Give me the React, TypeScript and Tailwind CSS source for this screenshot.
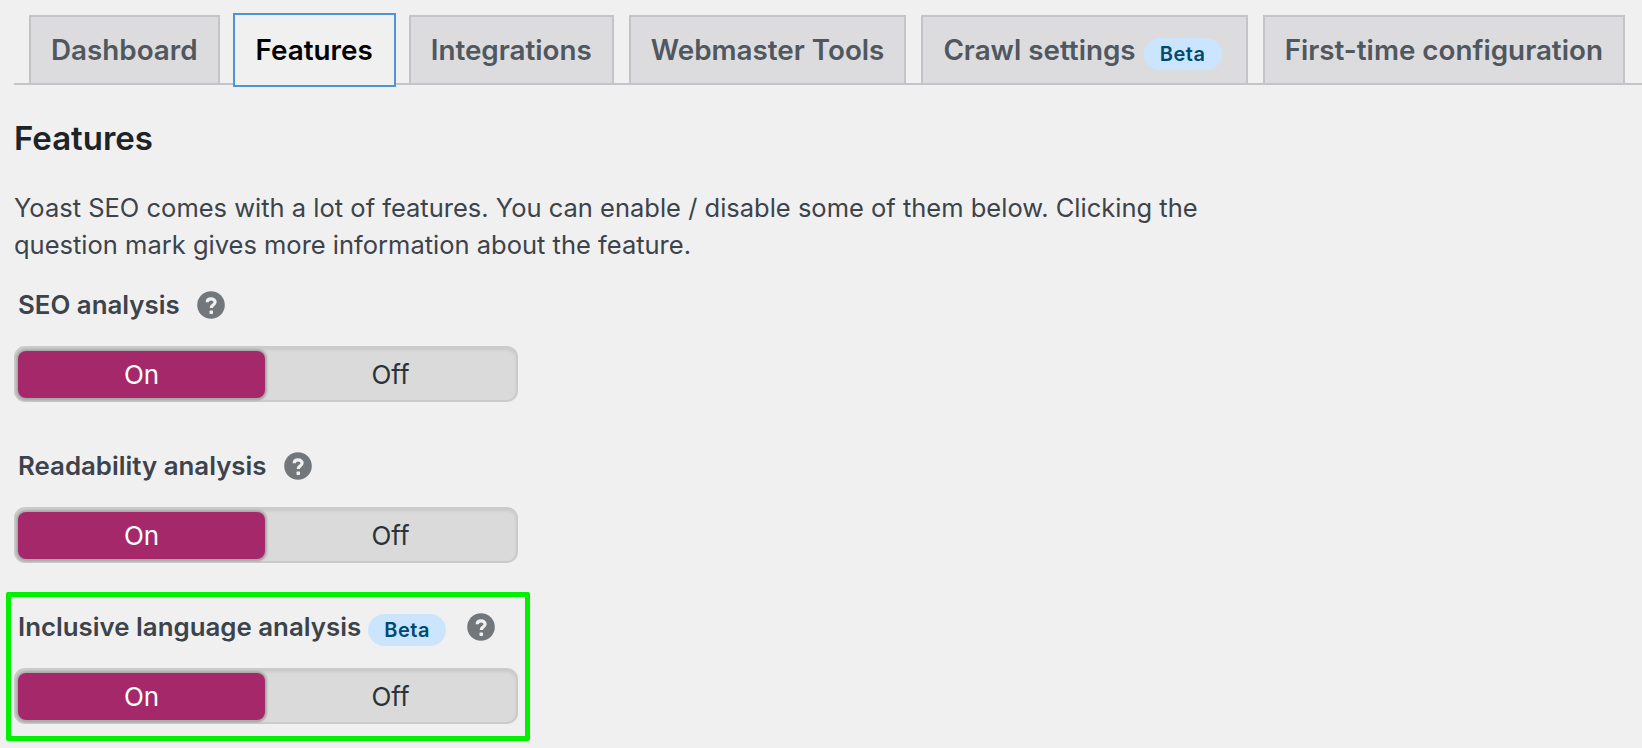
import React from "react";

const font = { fontFamily: "Inter, 'Liberation Sans', sans-serif" };

const HelpIcon = () => (
  <svg width="28" height="28" viewBox="0 0 28 28" className="shrink-0">
    <circle cx="14" cy="14" r="13.8" fill="#72777c" />
    <path d="M10.2 11.3c0-2.2 1.7-3.5 3.9-3.5s4 1.2 4 3.2c0 1.7-1 2.4-2.1 3.1-1.1.7-1.7 1.3-1.7 2.9" fill="none" stroke="#f0f0f1" strokeWidth="3.2" />
    <rect x="12.5" y="19.4" width="3.5" height="3.5" rx="0.7" fill="#f0f0f1" />
  </svg>
);

const BetaBadge = () => (
  <span className="inline-flex items-center justify-center w-[78px] h-[32px] rounded-2xl bg-[#cce5ff] text-[#004973] text-[20px] font-semibold tracking-[0.5px] shrink-0">
    Beta
  </span>
);

const Toggle = () => (
  <div className="w-[504px] h-[56px] rounded-[11px] bg-[#dadada] border-2 border-[#cbcbcb] flex px-[2px] pt-[3px] pb-[2px] shadow-[inset_0_2px_3px_rgba(0,0,0,0.08)]">
    <div className="w-[247px] h-full rounded-[8px] bg-[#a4286a] text-white text-[26px] flex items-center justify-center shadow-[0_0_2px_1.5px_#aaaaaa,0_2px_2px_rgba(0,0,0,0.2)]">
      On
    </div>
    <div className="flex-1 pl-[2px] text-[#2c3338] text-[26px] flex items-center justify-center">Off</div>
  </div>
);

const tabs = [
  { name: "Dashboard" },
  { name: "Features", active: true },
  { name: "Integrations" },
  { name: "Webmaster Tools" },
  { name: "Crawl settings", beta: true },
  { name: "First-time configuration" },
];

const App: React.FC = () => {
  return (
    <div className="w-[1642px] h-[748px] overflow-hidden bg-[#f0f0f1]" style={font}>
      <div className="pt-[15px] pl-[14px]">
        <div className="flex h-[70px] pl-[15px] gap-[15px] border-b-2 border-[#c3c4c7]">
          {tabs.map((tab) => (
            <div
              key={tab.name}
              className={
                tab.active
                  ? "h-[70px] px-[21px] pt-[1px] flex items-center gap-[8px] bg-[#f0f0f1] text-black text-[27.8px] font-semibold outline-[2.5px] outline-[#4f94d4] whitespace-nowrap"
                  : "h-[68px] px-[20px] pt-[1px] flex items-center gap-[8px] bg-[#dcdcde] text-[#50575e] text-[27.8px] font-semibold border-2 border-b-0 border-[#c3c4c7] whitespace-nowrap"
              }
            >
              {tab.name}
              {tab.beta && <span className="mr-[4px] mt-[2px]"><BetaBadge /></span>}
            </div>
          ))}
        </div>
        <h1 className="mt-[33px] text-[33px] leading-[40px] font-semibold text-[#1d2327]">Features</h1>
        <p className="mt-[32px] w-[1200px] text-[25.5px] leading-[36.5px] text-[#3c434a]">
          Yoast SEO comes with a lot of features. You can enable / disable some of them below. Clicking the question mark gives more information about the feature.
        </p>
        <section className="mt-[24px]">
          <div className="flex items-center h-[36px] pl-[4px] gap-[17px] text-[25.85px] font-semibold text-[#3c434a]">
            SEO analysis
            <HelpIcon />
          </div>
          <div className="mt-[23px]"><Toggle /></div>
        </section>
        <section className="mt-[46px]">
          <div className="flex items-center h-[36px] pl-[4px] gap-[17px] text-[25.85px] font-semibold text-[#3c434a]">
            Readability analysis
            <HelpIcon />
          </div>
          <div className="mt-[23px]"><Toggle /></div>
        </section>
        <section className="relative mt-[46px]">
          <div className="flex items-center h-[36px] pl-[4px] text-[25.85px] font-semibold text-[#3c434a]">
            Inclusive language analysis
            <span className="ml-[7px] mr-[21px] mt-[2px]"><BetaBadge /></span>
            <HelpIcon />
          </div>
          <div className="mt-[23px]"><Toggle /></div>
          <div className="absolute left-[-8px] top-[-17px] w-[524px] h-[149px] border-[5px] border-[#00f000] rounded-[2px] pointer-events-none" />
        </section>
      </div>
    </div>
  );
};

export default App;
